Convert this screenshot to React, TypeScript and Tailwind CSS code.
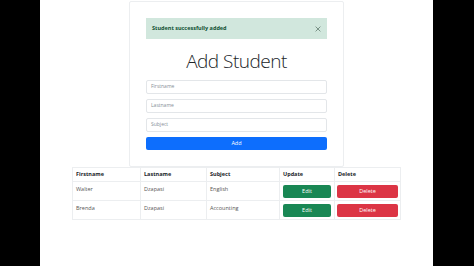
import React from "react";

const font = { fontFamily: '"Open Sans", "Liberation Sans", sans-serif' };

const rows = [
  { first: "Walter", last: "Dzapasi", subject: "English" },
  { first: "Brenda", last: "Dzapasi", subject: "Accounting" },
];

export default function App() {
  return (
    <div className="w-[474px] h-[266px] flex bg-black overflow-hidden" style={font}>
      <div className="w-[40px] shrink-0" />
      <main className="w-[393px] h-full bg-white text-[#212529] flex flex-col items-center">
        {/* Form card */}
        <section className="w-[215px] mt-[1px] border border-[#eceef0] rounded-[2px] px-[16px] pt-[16px] pb-[16px]">
          <div className="h-[21px] bg-[#d1e7dd] text-[#0f5132] flex items-center justify-between pl-[6px] pr-[6px]">
            <span className="text-[5.5px] font-bold">Student successfully added</span>
            <svg width="6" height="6" viewBox="0 0 10 10" className="text-[#3f5a4e]">
              <path d="M1 1 L9 9 M9 1 L1 9" stroke="currentColor" strokeWidth="1" />
            </svg>
          </div>
          <h1 className="text-[19px] font-light text-center leading-none mt-[13px] mb-[9px] tracking-[-0.5px]">
            Add Student
          </h1>
          <div className="flex flex-col gap-[5px]">
            {["Firstname", "Lastname", "Subject"].map((p) => (
              <div
                key={p}
                className="h-[14px] border border-[#e3e6e9] rounded-[2px] flex items-center pl-[4px] text-[5px] text-[#868e96]"
              >
                {p}
              </div>
            ))}
            <button className="h-[13px] bg-[#0d6efd] rounded-[2px] text-white text-[5.5px] flex items-center justify-center">
              Add
            </button>
          </div>
        </section>

        {/* Students table */}
        <table className="w-[328px] table-fixed border-collapse text-[5.5px] text-[#212529]">
          <thead>
            <tr className="h-[14px]">
              <th className="w-[68px] border border-[#eceef0] text-left font-bold pl-[3px]">Firstname</th>
              <th className="w-[66px] border border-[#eceef0] text-left font-bold pl-[3px]">Lastname</th>
              <th className="w-[73px] border border-[#eceef0] text-left font-bold pl-[3px]">Subject</th>
              <th className="w-[55px] border border-[#eceef0] text-left font-bold pl-[3px]">Update</th>
              <th className="w-[66px] border border-[#eceef0] text-left font-bold pl-[3px]">Delete</th>
            </tr>
          </thead>
          <tbody>
            {rows.map((r) => (
              <tr key={r.first} className="h-[19px]">
                <td className="border border-[#eceef0] align-top pl-[3px] pt-[3px] text-[#555]">{r.first}</td>
                <td className="border border-[#eceef0] align-top pl-[3px] pt-[3px] text-[#555]">{r.last}</td>
                <td className="border border-[#eceef0] align-top pl-[3px] pt-[3px] text-[#555]">{r.subject}</td>
                <td className="border border-[#eceef0] pl-[3px]">
                  <button className="w-[48px] h-[13px] bg-[#198754] rounded-[2px] text-white flex items-center justify-center">
                    Edit
                  </button>
                </td>
                <td className="border border-[#eceef0] pl-[2px]">
                  <button className="w-[61px] h-[13px] bg-[#dc3545] rounded-[2px] text-white flex items-center justify-center">
                    Delete
                  </button>
                </td>
              </tr>
            ))}
          </tbody>
        </table>
      </main>
      <div className="flex-1" />
    </div>
  );
}
